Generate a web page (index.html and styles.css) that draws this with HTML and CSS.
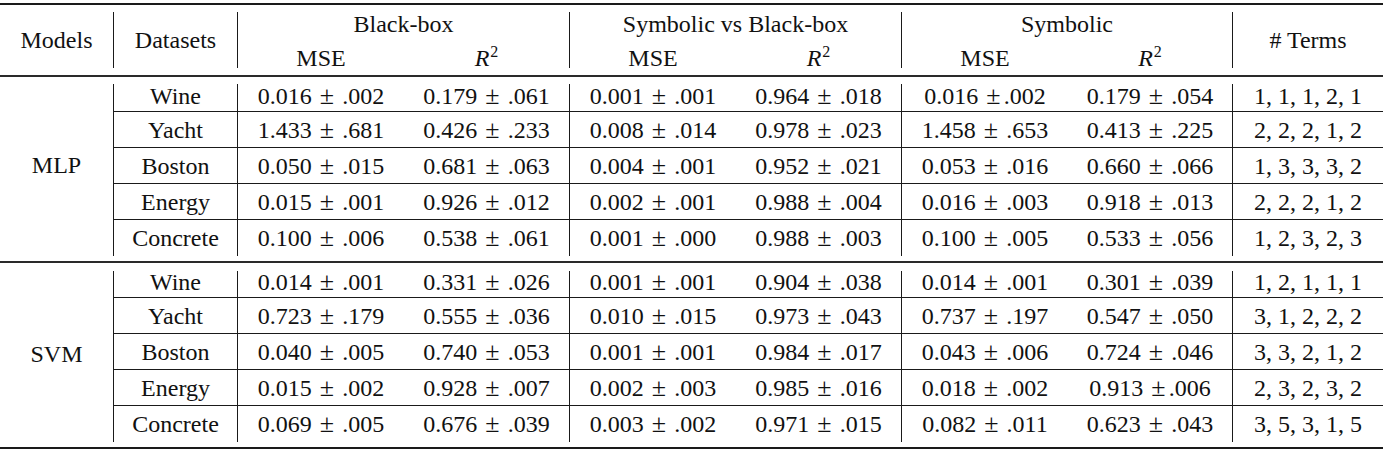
FILE: index.html
```html
<!DOCTYPE html>
<html lang="en">
<head>
    <meta charset="UTF-8">
    <title>Symbolic regression results</title>
    <link rel="stylesheet" href="styles.css">
</head>
<body>
    <table class="results">
        <colgroup>
            <col class="c-model">
            <col class="c-data">
            <col class="c-num"><col class="c-num">
            <col class="c-num"><col class="c-num">
            <col class="c-num"><col class="c-num-last">
            <col class="c-terms">
        </colgroup>
        <!-- top rule -->
        <tr class="gap gap-top"><td colspan="9"></td></tr>
        <tr class="head1">
            <th rowspan="2" class="vr">Models</th>
            <th rowspan="2" class="vr">Datasets</th>
            <th colspan="2" class="vr">Black-box</th>
            <th colspan="2" class="vr">Symbolic vs Black-box</th>
            <th colspan="2" class="vr">Symbolic</th>
            <th rowspan="2"># Terms</th>
        </tr>
        <tr class="head2">
            <th>MSE</th><th class="vr"><i>R</i><sup>2</sup></th>
            <th>MSE</th><th class="vr"><i>R</i><sup>2</sup></th>
            <th>MSE</th><th class="vr"><i>R</i><sup>2</sup></th>
        </tr>
        <tr class="gap gap-rule"><td colspan="9"></td></tr>
        <tr class="gap gap-after"><td colspan="9"></td></tr>

        <!-- MLP -->
        <tr class="first">
            <td rowspan="5" class="model mlp vr">MLP</td>
            <td class="vr cl">Wine</td>
            <td class="cl">0.016<span class="pm">±</span>.002</td>
            <td class="cl vr">0.179<span class="pm">±</span>.061</td>
            <td class="cl">0.001<span class="pm">±</span>.001</td>
            <td class="cl vr">0.964<span class="pm">±</span>.018</td>
            <td class="cl">0.016<span class="pm tight">±</span>.002</td>
            <td class="cl vr">0.179<span class="pm">±</span>.054</td>
            <td class="cl">1, 1, 1, 2, 1</td>
        </tr>
        <tr>
            <td class="vr cl">Yacht</td>
            <td class="cl">1.433<span class="pm">±</span>.681</td>
            <td class="cl vr">0.426<span class="pm">±</span>.233</td>
            <td class="cl">0.008<span class="pm">±</span>.014</td>
            <td class="cl vr">0.978<span class="pm">±</span>.023</td>
            <td class="cl">1.458<span class="pm">±</span>.653</td>
            <td class="cl vr">0.413<span class="pm">±</span>.225</td>
            <td class="cl">2, 2, 2, 1, 2</td>
        </tr>
        <tr>
            <td class="vr cl">Boston</td>
            <td class="cl">0.050<span class="pm">±</span>.015</td>
            <td class="cl vr">0.681<span class="pm">±</span>.063</td>
            <td class="cl">0.004<span class="pm">±</span>.001</td>
            <td class="cl vr">0.952<span class="pm">±</span>.021</td>
            <td class="cl">0.053<span class="pm">±</span>.016</td>
            <td class="cl vr">0.660<span class="pm">±</span>.066</td>
            <td class="cl">1, 3, 3, 3, 2</td>
        </tr>
        <tr>
            <td class="vr cl">Energy</td>
            <td class="cl">0.015<span class="pm">±</span>.001</td>
            <td class="cl vr">0.926<span class="pm">±</span>.012</td>
            <td class="cl">0.002<span class="pm">±</span>.001</td>
            <td class="cl vr">0.988<span class="pm">±</span>.004</td>
            <td class="cl">0.016<span class="pm">±</span>.003</td>
            <td class="cl vr">0.918<span class="pm">±</span>.013</td>
            <td class="cl">2, 2, 2, 1, 2</td>
        </tr>
        <tr class="last">
            <td class="vr">Concrete</td>
            <td>0.100<span class="pm">±</span>.006</td>
            <td class="vr">0.538<span class="pm">±</span>.061</td>
            <td>0.001<span class="pm">±</span>.000</td>
            <td class="vr">0.988<span class="pm">±</span>.003</td>
            <td>0.100<span class="pm">±</span>.005</td>
            <td class="vr">0.533<span class="pm">±</span>.056</td>
            <td>1, 2, 3, 2, 3</td>
        </tr>
        <tr class="gap gap-mid"><td colspan="9"></td></tr>
        <tr class="gap gap-after-mid"><td colspan="9"></td></tr>

        <!-- SVM -->
        <tr class="first first-svm">
            <td rowspan="5" class="model svm vr">SVM</td>
            <td class="vr cl">Wine</td>
            <td class="cl">0.014<span class="pm">±</span>.001</td>
            <td class="cl vr">0.331<span class="pm">±</span>.026</td>
            <td class="cl">0.001<span class="pm">±</span>.001</td>
            <td class="cl vr">0.904<span class="pm">±</span>.038</td>
            <td class="cl">0.014<span class="pm">±</span>.001</td>
            <td class="cl vr">0.301<span class="pm">±</span>.039</td>
            <td class="cl">1, 2, 1, 1, 1</td>
        </tr>
        <tr>
            <td class="vr cl">Yacht</td>
            <td class="cl">0.723<span class="pm">±</span>.179</td>
            <td class="cl vr">0.555<span class="pm">±</span>.036</td>
            <td class="cl">0.010<span class="pm">±</span>.015</td>
            <td class="cl vr">0.973<span class="pm">±</span>.043</td>
            <td class="cl">0.737<span class="pm">±</span>.197</td>
            <td class="cl vr">0.547<span class="pm">±</span>.050</td>
            <td class="cl">3, 1, 2, 2, 2</td>
        </tr>
        <tr>
            <td class="vr cl">Boston</td>
            <td class="cl">0.040<span class="pm">±</span>.005</td>
            <td class="cl vr">0.740<span class="pm">±</span>.053</td>
            <td class="cl">0.001<span class="pm">±</span>.001</td>
            <td class="cl vr">0.984<span class="pm">±</span>.017</td>
            <td class="cl">0.043<span class="pm">±</span>.006</td>
            <td class="cl vr">0.724<span class="pm">±</span>.046</td>
            <td class="cl">3, 3, 2, 1, 2</td>
        </tr>
        <tr>
            <td class="vr cl">Energy</td>
            <td class="cl">0.015<span class="pm">±</span>.002</td>
            <td class="cl vr">0.928<span class="pm">±</span>.007</td>
            <td class="cl">0.002<span class="pm">±</span>.003</td>
            <td class="cl vr">0.985<span class="pm">±</span>.016</td>
            <td class="cl">0.018<span class="pm">±</span>.002</td>
            <td class="cl vr">0.913<span class="pm tight">±</span>.006</td>
            <td class="cl">2, 3, 2, 3, 2</td>
        </tr>
        <tr class="last">
            <td class="vr">Concrete</td>
            <td>0.069<span class="pm">±</span>.005</td>
            <td class="vr">0.676<span class="pm">±</span>.039</td>
            <td>0.003<span class="pm">±</span>.002</td>
            <td class="vr">0.971<span class="pm">±</span>.015</td>
            <td>0.082<span class="pm">±</span>.011</td>
            <td class="vr">0.623<span class="pm">±</span>.043</td>
            <td>3, 5, 3, 1, 5</td>
        </tr>
        <!-- bottom rule -->
        <tr class="gap gap-bottom"><td colspan="9"></td></tr>
    </table>
</body>
</html>
```

FILE: styles.css
```css
body {
    margin: 0;
    background: #fff;
}

/* table drawn like a booktabs one */
.results {
    table-layout: fixed;
    width: 1383px;
    margin-top: 3px;
    border-collapse: separate;
    border-spacing: 0;
    font-family: "Liberation Serif", "Times New Roman", serif;
    font-size: 24px;
    line-height: 20px;
    color: #111;
}

.c-model { width: 114px; }
.c-data { width: 124px; }
.c-num { width: 166px; }
.c-num-last { width: 165px; }
.c-terms { width: 150px; }

.results th,
.results td {
    padding: 0;
    text-align: center;
    vertical-align: middle;
    font-weight: normal;
    white-space: nowrap;
}

.vr { border-right: 1px solid #1a1a1a; }

/* rules and the breaks around them (td height is the content box) */
.gap-top td { height: 7px; border-top: 2px solid #1a1a1a; }
.gap-rule td { height: 7px; border-bottom: 2px solid #2a2a2a; }
.gap-after td { height: 7px; }
.gap-mid td { height: 5px; border-bottom: 2px solid #2a2a2a; }
.gap-after-mid td { height: 8px; }
.gap-bottom td { height: 5px; border-bottom: 2px solid #1a1a1a; }

/* header */
.head1 th { height: 23px; }
.head2 th {
    height: 19px;
    vertical-align: top;
    padding-top: 14px;
    line-height: 19px;
}

.results sup {
    font-size: 16px;
    line-height: 0;
    vertical-align: 9px;
    margin-left: 1px;
}

/* body rows */
.results tr { height: 36px; }
.results tr.gap,
.results tr.head1,
.results tr.head2 { height: auto; }
.results tr.first { height: 28px; }
.results tr.first-svm { height: 27px; }
.results tr.first td { padding-bottom: 4px; }

.results td.model.mlp { padding-bottom: 10px; }
.results td.model.svm { padding-bottom: 6px; }

.cl { border-bottom: 1px solid #1a1a1a; }

.pm {
    font-size: 26px;
    margin: 0 8px;
}
.pm.tight {
    margin-right: 3px;
}
```
